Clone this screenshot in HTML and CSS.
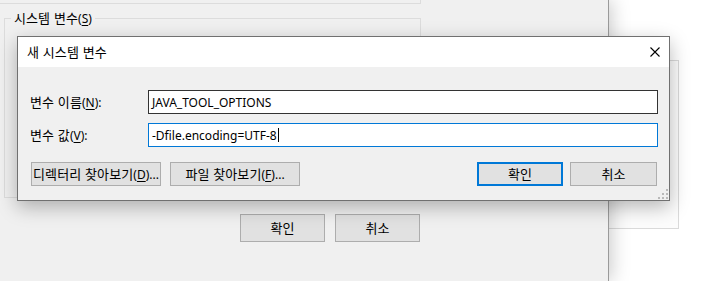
FILE: index.html
```html
<!DOCTYPE html>
<html lang="ko">
<head>
<meta charset="utf-8">
<title>새 시스템 변수</title>
<link rel="stylesheet" href="styles.css">
</head>
<body>
<div class="desk">
  <div class="side-box"></div>
  <div class="env-window">
    <div class="user-box"></div>
    <div class="group"><span class="legend"><span class="ko">시스템 변수</span>(<u>S</u>)</span></div>
    <div class="env-buttons">
      <button class="btn env-btn"><span class="ko">확인</span></button>
      <button class="btn env-btn"><span class="ko">취소</span></button>
    </div>
  </div>
  <div class="dialog">
    <div class="titlebar">
      <span class="title ko">새 시스템 변수</span>
      <svg class="close" width="10" height="10" viewBox="0 0 10 10"><path d="M0.5 0.5 L9.5 9.5 M9.5 0.5 L0.5 9.5" stroke="#000" stroke-width="1.1" fill="none"/></svg>
    </div>
    <div class="dlg-body">
      <div class="field">
        <label class="label"><span class="ko">변수 이름</span>(<u>N</u>):</label>
        <div class="input">JAVA_TOOL_OPTIONS</div>
      </div>
      <div class="field">
        <label class="label"><span class="ko">변수 값</span>(<u>V</u>):</label>
        <div class="input focus">-Dfile.encoding=UTF-8<span class="caret"></span></div>
      </div>
      <div class="actions">
        <div class="group-btns">
          <button class="btn wide"><span class="ko">디렉터리 찾아보기</span>(<u>D</u>)...</button>
          <button class="btn wide"><span class="ko">파일 찾아보기</span>(<u>F</u>)...</button>
        </div>
        <div class="group-btns right">
          <button class="btn ok default"><span class="ko">확인</span></button>
          <button class="btn cancel"><span class="ko">취소</span></button>
        </div>
      </div>
    </div>
    <svg class="grip" width="10" height="10" viewBox="0 0 10 10" fill="#b9b9b9">
      <rect x="8" y="0" width="2" height="2"/>
      <rect x="4" y="4" width="2" height="2"/><rect x="8" y="4" width="2" height="2"/>
      <rect x="0" y="8" width="2" height="2"/><rect x="4" y="8" width="2" height="2"/><rect x="8" y="8" width="2" height="2"/>
    </svg>
  </div>
</div>
</body>
</html>
```
FILE: styles.css
```css
* { box-sizing: border-box; }
html, body { margin: 0; padding: 0; }
body {
  width: 711px;
  height: 281px;
  overflow: hidden;
  background: #ffffff;
  font-family: "Noto Sans", "Noto Sans CJK KR", sans-serif;
  font-size: 12px;
  color: #000;
}
u { text-decoration: underline; text-underline-offset: 2px; }
.ko {
  font-family: "Noto Sans CJK KR", sans-serif;
  font-size: 13px;
  letter-spacing: 0.1px;
}

.desk { position: relative; width: 711px; height: 281px; }

.side-box {
  position: absolute;
  left: 560px;
  top: 60px;
  width: 119px;
  height: 169px;
  border: 1px solid #dadada;
  background: #fcfcfc;
}

.env-window {
  position: absolute;
  left: 0;
  top: 0;
  width: 609px;
  height: 281px;
  background: #f0f0f0;
  border-right: 1px solid #9a9a9a;
  box-shadow: 2px 0 18px rgba(0,0,0,0.22);
}
.user-box {
  width: 421px;
  height: 4px;
  border-right: 1px solid #dcdcdc;
  border-bottom: 1px solid #dcdcdc;
}
.group {
  position: relative;
  margin: 14px 0 0 4px;
  width: 417px;
  height: 180px;
  border: 1px solid #dcdcdc;
}
.legend {
  position: absolute;
  left: 6px;
  top: -10px;
  padding: 0 3px;
  background: #f0f0f0;
  line-height: 18px;
  color: #000;
}
.env-buttons {
  display: flex;
  gap: 10px;
  margin: 16px 0 0 240px;
}
.btn {
  font: inherit;
  font-size: 12px;
  color: #000;
  background: #e1e1e1;
  border: 1px solid #adadad;
  padding: 0;
  margin: 0;
  height: 24px;
  line-height: 20px;
  white-space: nowrap;
}
.env-btn { width: 85px; height: 28px; }

.dialog {
  position: absolute;
  left: 17px;
  top: 36px;
  width: 653px;
  height: 165px;
  border: 1px solid #707070;
  background: #f0f0f0;
  box-shadow: 0 6px 18px rgba(0,0,0,0.28);
  display: flex;
  flex-direction: column;
}
.titlebar {
  height: 30px;
  background: #ffffff;
  display: flex;
  align-items: center;
  justify-content: space-between;
  padding: 0 9px 0 9px;
  flex: none;
}
.title { line-height: 16px; margin-top: 0; }
.close { display: block; margin-top: -1px; }

.dlg-body {
  padding: 23px 11px 0 12px;
  display: flex;
  flex-direction: column;
  gap: 9px;
}
.field { display: flex; align-items: center; }
.label { width: 118px; flex: none; line-height: 16px; }
.input {
  flex: 1;
  height: 24px;
  background: #fff;
  border: 1px solid #333333;
  padding: 0 3px;
  line-height: 21px;
  display: flex;
  align-items: center;
}
.input.focus { border-color: #0078d7; }
.caret {
  display: inline-block;
  width: 1px;
  height: 14px;
  background: #000;
  margin-left: 1px;
}
.actions {
  display: flex;
  justify-content: space-between;
  margin-top: 6px;
  padding: 0 1px 0 1px;
}
.group-btns { display: flex; gap: 9px; }
.group-btns.right { gap: 7px; }
.wide { width: 130px; }
.ok { width: 86px; }
.cancel { width: 87px; }
.default { border: 2px solid #0078d7; line-height: 18px; }

.grip {
  position: absolute;
  right: 1px;
  bottom: 1px;
}
```
